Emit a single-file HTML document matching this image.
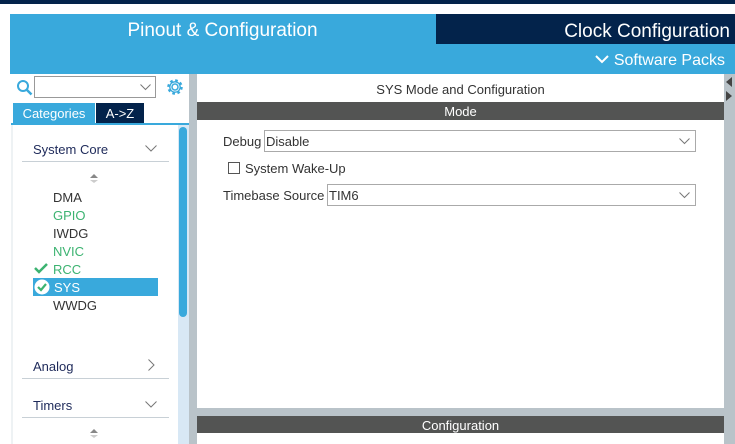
<!DOCTYPE html><html><head><style>
*{margin:0;padding:0;box-sizing:border-box}
body{width:735px;height:444px;overflow:hidden;background:#fff;font-family:"Liberation Sans",sans-serif;position:relative;font-size:13px;color:#333}
.a{position:absolute}
.t{white-space:nowrap}
</style></head><body>
<div class="a" style="left:0;top:0;width:735px;height:4px;background:#03234b"></div>
<div class="a" style="left:10px;top:14px;width:725px;height:60px;background:#39a9dc"></div>
<div class="a t" style="left:10px;top:20px;width:425px;text-align:center;color:#fff;font-size:19px">Pinout &amp; Configuration</div>
<div class="a" style="left:436px;top:14px;width:299px;height:30px;background:#03234b"></div>
<div class="a t" style="right:5px;top:21px;color:#fff;font-size:19px">Clock Configuration</div>
<div class="a t" style="right:10px;top:52px;color:#fff;font-size:16px"><svg width="14" height="10" style="margin-right:5px;vertical-align:1px"><path d="M1 2l6 6 6-6" stroke="#fff" stroke-width="2" fill="none"/></svg>Software Packs</div>
<div class="a" style="left:189px;top:74px;width:8px;height:370px;background:#b9c3c9"></div>
<div class="a" style="left:724px;top:74px;width:11px;height:370px;background:#b9c3c9"></div>
<div class="a" style="left:197px;top:408px;width:527px;height:8px;background:#b9c3c9"></div>
<div class="a" style="left:726px;top:77px;width:0;height:0;border:5px solid transparent;border-right:6px solid #444;border-left:0"></div>
<div class="a" style="left:726px;top:91px;width:0;height:0;border:5px solid transparent;border-left:6px solid #444;border-right:0"></div>
<div class="a t" style="left:197px;top:82px;width:527px;text-align:center;font-size:13px;color:#333">SYS Mode and Configuration</div>
<div class="a" style="left:197px;top:102px;width:527px;height:18px;background:#535453;color:#fff;text-align:center;font-size:13px;line-height:19px">Mode</div>
<div class="a t" style="left:223px;top:134px">Debug</div>
<div class="a" style="left:264px;top:130px;width:432px;height:22px;border:1px solid #aaa;padding:3px 1px;line-height:15px">Disable<svg class="a" style="right:5px;top:7px" width="11" height="7"><path d="M0.5 0.5l5 5 5-5" stroke="#777" fill="none"/></svg></div>
<div class="a" style="left:228px;top:162px;width:12px;height:12px;border:1px solid #555"></div>
<div class="a t" style="left:245px;top:161px">System Wake-Up</div>
<div class="a t" style="left:223px;top:188px">Timebase Source</div>
<div class="a" style="left:327px;top:184px;width:369px;height:22px;border:1px solid #aaa;padding:3px 1px;line-height:15px">TIM6<svg class="a" style="right:5px;top:7px" width="11" height="7"><path d="M0.5 0.5l5 5 5-5" stroke="#777" fill="none"/></svg></div>
<div class="a" style="left:197px;top:416px;width:527px;height:17px;background:#535453;color:#fff;text-align:center;font-size:13px;line-height:19px">Configuration</div>
<svg class="a" style="left:16px;top:79px" width="18" height="18"><circle cx="7" cy="7" r="5" stroke="#39a9dc" stroke-width="2" fill="none"/><path d="M10.5 10.5l5 5" stroke="#39a9dc" stroke-width="2.5"/></svg>
<div class="a" style="left:34px;top:76px;width:122px;height:22px;border:1px solid #999"><svg class="a" style="right:4px;top:7px" width="11" height="7"><path d="M0.5 0.5l5 5 5-5" stroke="#777" fill="none"/></svg></div>
<svg class="a" style="left:166px;top:78px" width="18" height="18"><circle cx="9" cy="9" r="3" stroke="#39a9dc" stroke-width="1.5" fill="none"/><circle cx="9" cy="9" r="6.5" stroke="#39a9dc" stroke-width="2.5" stroke-dasharray="2.6 2.5" fill="none"/><circle cx="9" cy="9" r="5.2" stroke="#39a9dc" stroke-width="1.3" fill="none"/></svg>
<div class="a" style="left:13px;top:103px;width:82px;height:20px;background:#39a9dc;color:#fff;text-align:center;line-height:21px">Categories</div>
<div class="a" style="left:96px;top:103px;width:48px;height:20px;background:#03234b;color:#fff;text-align:center;line-height:21px">A-&gt;Z</div>
<div class="a" style="left:11px;top:123px;width:178px;height:2px;background:#39a9dc"></div>
<div class="a" style="left:11px;top:125px;width:2px;height:319px;background:#eef2f4"></div>
<div class="a" style="left:178px;top:125px;width:11px;height:319px;background:#d8e8f5"></div>
<div class="a" style="left:179px;top:127px;width:8px;height:190px;background:#39a9dc;border-radius:4px"></div>
<div class="a t" style="left:33px;top:142px;color:#1e2a5a">System Core</div>
<svg class="a" style="left:145px;top:145px" width="12" height="7"><path d="M0.5 0.5l5.5 5.5 5.5-5.5" stroke="#777" fill="none"/></svg>
<div class="a" style="left:22px;top:161px;width:147px;height:1px;background:#c8d0d6"></div>
<div class="a" style="left:90px;top:174px;border:4px solid transparent;border-bottom:4px solid #888;border-top:0"></div>
<div class="a" style="left:90px;top:180px;border:4px solid transparent;border-top:3px solid #ccc;border-bottom:0"></div>
<div class="a t" style="left:53px;top:190px;color:#333">DMA</div>
<div class="a t" style="left:53px;top:208px;color:#3cb371">GPIO</div>
<div class="a t" style="left:53px;top:226px;color:#333">IWDG</div>
<div class="a t" style="left:53px;top:244px;color:#3cb371">NVIC</div>
<svg class="a" style="left:34px;top:263px" width="14" height="11"><path d="M1 5l4 4 8-8" stroke="#3cb371" stroke-width="2.5" fill="none"/></svg>
<div class="a t" style="left:53px;top:262px;color:#3cb371">RCC</div>
<div class="a" style="left:33px;top:278px;width:125px;height:18px;background:#39a9dc"></div>
<svg class="a" style="left:34px;top:279px" width="16" height="16"><circle cx="8" cy="8" r="7.5" fill="#fff"/><path d="M4 8l3 3 5-6" stroke="#3cb371" stroke-width="2.2" fill="none"/></svg>
<div class="a t" style="left:54px;top:280px;color:#fff">SYS</div>
<div class="a t" style="left:53px;top:298px;color:#333">WWDG</div>
<div class="a t" style="left:33px;top:359px;color:#1e2a5a">Analog</div>
<svg class="a" style="left:148px;top:359px" width="7" height="12"><path d="M0.5 0.5l5.5 5.5-5.5 5.5" stroke="#777" fill="none"/></svg>
<div class="a" style="left:22px;top:378px;width:147px;height:1px;background:#c8d0d6"></div>
<div class="a t" style="left:33px;top:398px;color:#1e2a5a">Timers</div>
<svg class="a" style="left:145px;top:401px" width="12" height="7"><path d="M0.5 0.5l5.5 5.5 5.5-5.5" stroke="#777" fill="none"/></svg>
<div class="a" style="left:22px;top:417px;width:147px;height:1px;background:#c8d0d6"></div>
<div class="a" style="left:90px;top:429px;border:4px solid transparent;border-bottom:4px solid #888;border-top:0"></div>
<div class="a" style="left:90px;top:435px;border:4px solid transparent;border-top:3px solid #ccc;border-bottom:0"></div>
</body></html>
